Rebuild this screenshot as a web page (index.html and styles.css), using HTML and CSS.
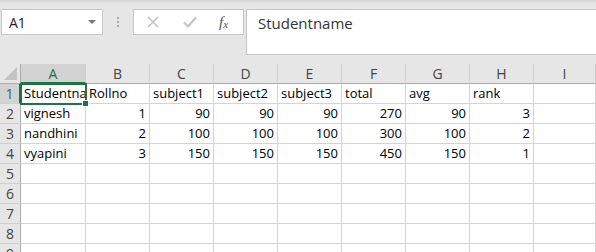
FILE: index.html
```html
<!DOCTYPE html>
<html lang="en">
<head>
    <meta charset="UTF-8">
    <title>Sheet1</title>
    <link rel="stylesheet" href="styles.css">
</head>
<body>
    <div class="formula-bar">
        <div class="name-box">
            <span>A1</span>
            <span class="name-arrow"></span>
        </div>
        <div class="grip"><i></i><i></i><i></i></div>
        <div class="fx-buttons">
            <svg class="fx-icon" width="14" height="14" viewBox="0 0 14 14">
                <path d="M2 2 L12 12 M12 2 L2 12" stroke="#c3c3c3" stroke-width="1.6" fill="none"/>
            </svg>
            <svg class="fx-icon" width="16" height="14" viewBox="0 0 16 14">
                <path d="M2 7.5 L6 11.5 L14 2.5" stroke="#c3c3c3" stroke-width="2.2" fill="none"/>
            </svg>
            <span class="fx-label">f<sub>x</sub></span>
        </div>
        <div class="formula-input">Studentname</div>
    </div>

    <div class="sheet">
        <div class="corner"><span class="corner-tri"></span></div>
        <div class="col-head selected">A</div>
        <div class="col-head">B</div>
        <div class="col-head">C</div>
        <div class="col-head">D</div>
        <div class="col-head">E</div>
        <div class="col-head">F</div>
        <div class="col-head">G</div>
        <div class="col-head">H</div>
        <div class="col-head">I</div>

        <div class="row-head selected">1</div>
        <div class="cell active"><span class="cell-text">Studentname</span></div>
        <div class="cell">Rollno</div>
        <div class="cell">subject1</div>
        <div class="cell">subject2</div>
        <div class="cell">subject3</div>
        <div class="cell">total</div>
        <div class="cell">avg</div>
        <div class="cell">rank</div>
        <div class="cell"></div>

        <div class="row-head">2</div>
        <div class="cell">vignesh</div>
        <div class="cell num">1</div>
        <div class="cell num">90</div>
        <div class="cell num">90</div>
        <div class="cell num">90</div>
        <div class="cell num">270</div>
        <div class="cell num">90</div>
        <div class="cell num">3</div>
        <div class="cell"></div>

        <div class="row-head">3</div>
        <div class="cell">nandhini</div>
        <div class="cell num">2</div>
        <div class="cell num">100</div>
        <div class="cell num">100</div>
        <div class="cell num">100</div>
        <div class="cell num">300</div>
        <div class="cell num">100</div>
        <div class="cell num">2</div>
        <div class="cell"></div>

        <div class="row-head">4</div>
        <div class="cell">vyapini</div>
        <div class="cell num">3</div>
        <div class="cell num">150</div>
        <div class="cell num">150</div>
        <div class="cell num">150</div>
        <div class="cell num">450</div>
        <div class="cell num">150</div>
        <div class="cell num">1</div>
        <div class="cell"></div>

        <div class="row-head">5</div>
        <div class="cell"></div><div class="cell"></div><div class="cell"></div><div class="cell"></div><div class="cell"></div><div class="cell"></div><div class="cell"></div><div class="cell"></div><div class="cell"></div>

        <div class="row-head">6</div>
        <div class="cell"></div><div class="cell"></div><div class="cell"></div><div class="cell"></div><div class="cell"></div><div class="cell"></div><div class="cell"></div><div class="cell"></div><div class="cell"></div>

        <div class="row-head">7</div>
        <div class="cell"></div><div class="cell"></div><div class="cell"></div><div class="cell"></div><div class="cell"></div><div class="cell"></div><div class="cell"></div><div class="cell"></div><div class="cell"></div>

        <div class="row-head">8</div>
        <div class="cell"></div><div class="cell"></div><div class="cell"></div><div class="cell"></div><div class="cell"></div><div class="cell"></div><div class="cell"></div><div class="cell"></div><div class="cell"></div>

        <div class="row-head">9</div>
        <div class="cell"></div><div class="cell"></div><div class="cell"></div><div class="cell"></div><div class="cell"></div><div class="cell"></div><div class="cell"></div><div class="cell"></div><div class="cell"></div>
    </div>
</body>
</html>
```

FILE: styles.css
```css
:root {
    --bg: #e6e6e6;
    --box-border: #c6c6c6;
    --grid-line: #d4d4d4;
    --head-line: #ababab;
    --head-text: #444444;
    --excel-green: #217346;
}

body {
    margin: 0;
    background-color: var(--bg);
    font-family: "Open Sans", "Noto Sans", sans-serif;
    overflow: hidden;
}

/* Barre de formule */
.formula-bar {
    height: 64px;
    box-sizing: border-box;
    padding-top: 9px;
    display: flex;
    align-items: flex-start;
    background: linear-gradient(#d2d2d2, var(--bg) 4px);
}

.name-box {
    margin-left: 1px;
    width: 102px;
    height: 26px;
    box-sizing: border-box;
    border: 1px solid var(--box-border);
    background-color: #fff;
    display: flex;
    align-items: center;
    justify-content: space-between;
    padding: 0 6px 0 7px;
    font-size: 14px;
    color: #222;
}

.name-arrow {
    width: 0;
    height: 0;
    border-left: 4px solid transparent;
    border-right: 4px solid transparent;
    border-top: 4px solid #777;
}

.grip {
    width: 30px;
    height: 26px;
    display: flex;
    flex-direction: column;
    align-items: center;
    justify-content: center;
    gap: 2px;
}

.grip i {
    width: 2px;
    height: 2px;
    background-color: #a8a8a8;
}

.fx-buttons {
    width: 111px;
    height: 26px;
    box-sizing: border-box;
    border: 1px solid var(--box-border);
    background-color: #fff;
    display: flex;
    align-items: center;
    padding-left: 12px;
    gap: 22px;
}

.fx-label {
    font-family: "Liberation Serif", serif;
    font-style: italic;
    font-size: 15px;
    color: #555;
    margin-left: -1px;
}

.fx-label sub {
    font-size: 11px;
    vertical-align: -1px;
}

.formula-input {
    margin-left: 2px;
    flex: 1;
    height: 46px;
    box-sizing: border-box;
    border: 1px solid var(--box-border);
    border-right: none;
    background-color: #fff;
    padding: 3px 11px;
    font-size: 15px;
    color: #333;
}

/* Grille */
.sheet {
    display: grid;
    grid-template-columns: 21px 65px repeat(7, 64px) 1fr;
    grid-auto-rows: 20px;
    background-color: #fff;
}

.corner,
.col-head,
.row-head {
    background-color: var(--bg);
    color: var(--head-text);
    font-size: 14px;
    box-sizing: border-box;
}

.corner {
    border-right: 1px solid var(--head-line);
    border-bottom: 1px solid var(--head-line);
    position: relative;
}

.corner-tri {
    position: absolute;
    right: 3px;
    bottom: 3px;
    width: 0;
    height: 0;
    border-left: 13px solid transparent;
    border-bottom: 13px solid #c4c4c4;
}

.col-head {
    border-right: 1px solid #cfcfcf;
    border-bottom: 1px solid var(--head-line);
    display: flex;
    align-items: center;
    justify-content: center;
}

.row-head {
    border-right: 1px solid var(--head-line);
    border-bottom: 1px solid #cfcfcf;
    display: flex;
    align-items: center;
    justify-content: center;
}

.col-head.selected {
    background-color: #d2d2d2;
    color: var(--excel-green);
    border-bottom: 2px solid var(--excel-green);
}

.row-head.selected {
    background-color: #d2d2d2;
    color: var(--excel-green);
    border-right: 2px solid var(--excel-green);
}

.cell {
    box-sizing: border-box;
    border-right: 1px solid var(--grid-line);
    border-bottom: 1px solid var(--grid-line);
    padding: 0 3px;
    font-size: 13px;
    line-height: 19px;
    color: #000;
    white-space: nowrap;
    overflow: hidden;
}

.cell.num {
    text-align: right;
}

.cell.active {
    position: relative;
    overflow: visible;
    padding: 0;
    outline: 2px solid var(--excel-green);
    outline-offset: -1px;
    z-index: 1;
}

.cell-text {
    display: block;
    height: 100%;
    padding: 0 3px;
    overflow: hidden;
}

.cell.active::after {
    content: "";
    position: absolute;
    right: -4px;
    bottom: -4px;
    width: 5px;
    height: 5px;
    background-color: var(--excel-green);
    border: 1px solid #fff;
}
```
